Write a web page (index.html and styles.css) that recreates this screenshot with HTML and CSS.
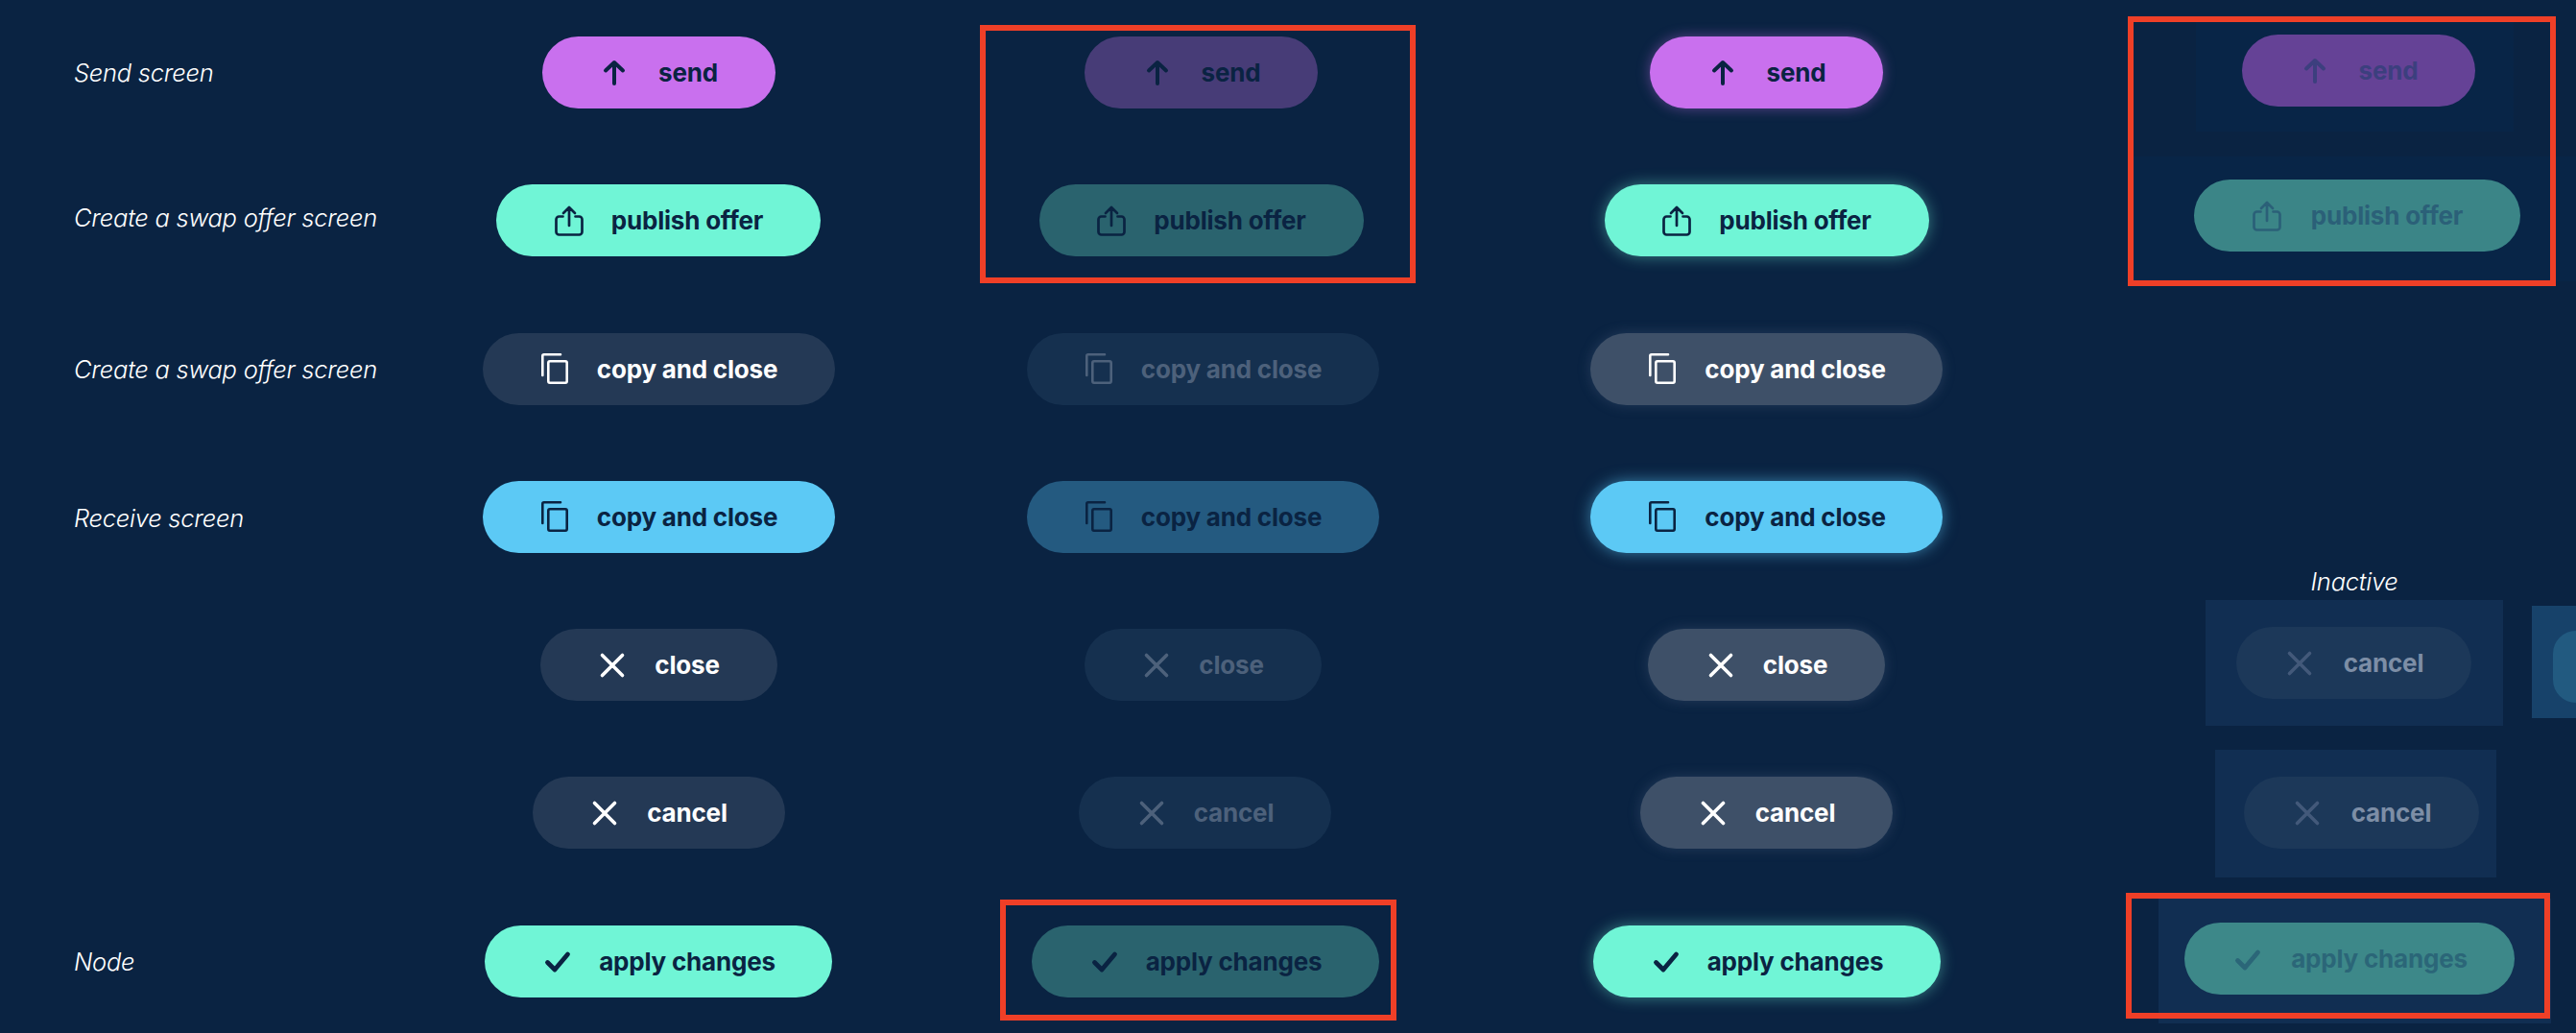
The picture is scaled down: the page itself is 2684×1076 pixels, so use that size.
FILE: index.html
```html
<!DOCTYPE html>
<html lang="en">
<head>
<meta charset="utf-8">
<title>Button states</title>
<link rel="stylesheet" href="styles.css">
</head>
<body>
<svg class="defs" width="0" height="0" aria-hidden="true">
  <symbol id="i-up" viewBox="0 0 32 32"><path d="M16 27V5.500M7 13.500 16 5 25 13.500" fill="none" stroke="currentColor" stroke-width="4" stroke-linecap="round" stroke-linejoin="round"/></symbol>
  <symbol id="i-share" viewBox="0 0 32 32"><path d="M9.500 11.500H5.500A3 3 0 0 0 2.500 14.500V27.500A3 3 0 0 0 5.500 30.500H26.500A3 3 0 0 0 29.500 27.500V14.500A3 3 0 0 0 26.500 11.500H22.500M16 21V2M10 8 16 2 22 8" fill="none" stroke="currentColor" stroke-width="2.700" stroke-linecap="round" stroke-linejoin="round"/></symbol>
  <symbol id="i-copy" viewBox="0 0 32 32"><path d="M3.300 23V2.800A1.500 1.500 0 0 1 4.800 1.300H22" fill="none" stroke="currentColor" stroke-width="2.600" stroke-linecap="round" stroke-linejoin="round"/><rect x="9.300" y="8.300" width="19.400" height="22.400" rx="1.600" fill="none" stroke="currentColor" stroke-width="2.600"/></symbol>
  <symbol id="i-x" viewBox="0 0 32 32"><path d="M5.500 5.500 26.500 26.500M26.500 5.500 5.500 26.500" fill="none" stroke="currentColor" stroke-width="3.600" stroke-linecap="round"/></symbol>
  <symbol id="i-check" viewBox="0 0 32 32"><path d="M6.500 17.500 14 25 27.500 9" fill="none" stroke="currentColor" stroke-width="4.800" stroke-linecap="round" stroke-linejoin="round"/></symbol>
</svg>

<main class="sheet">
  <div class="label">Send screen</div>
  <div class="cell"><a class="btn purple w-send"><svg class="ic"><use href="#i-up"/></svg><span>send</span></a></div>
  <div class="cell dim"><a class="btn purple w-send shift-l"><svg class="ic"><use href="#i-up"/></svg><span>send</span></a></div>
  <div class="cell"><a class="btn purple w-send glow"><svg class="ic"><use href="#i-up"/></svg><span>send</span></a></div>

  <div class="label up">Create a swap offer screen</div>
  <div class="cell"><a class="btn mint w-pub"><svg class="ic"><use href="#i-share"/></svg><span>publish offer</span></a></div>
  <div class="cell dim"><a class="btn mint w-pub shift-l"><svg class="ic"><use href="#i-share"/></svg><span>publish offer</span></a></div>
  <div class="cell"><a class="btn mint w-pub glow"><svg class="ic"><use href="#i-share"/></svg><span>publish offer</span></a></div>

  <div class="label">Create a swap offer screen</div>
  <div class="cell"><a class="btn slate w-copy"><svg class="ic"><use href="#i-copy"/></svg><span>copy and close</span></a></div>
  <div class="cell"><a class="btn slate w-copy off"><svg class="ic"><use href="#i-copy"/></svg><span>copy and close</span></a></div>
  <div class="cell"><a class="btn slate w-copy hover"><svg class="ic"><use href="#i-copy"/></svg><span>copy and close</span></a></div>

  <div class="label down">Receive screen</div>
  <div class="cell"><a class="btn sky w-copy"><svg class="ic"><use href="#i-copy"/></svg><span>copy and close</span></a></div>
  <div class="cell dim"><a class="btn sky w-copy"><svg class="ic"><use href="#i-copy"/></svg><span>copy and close</span></a></div>
  <div class="cell"><a class="btn sky w-copy glow"><svg class="ic"><use href="#i-copy"/></svg><span>copy and close</span></a></div>

  <div class="label"></div>
  <div class="cell"><a class="btn slate w-close"><svg class="ic"><use href="#i-x"/></svg><span>close</span></a></div>
  <div class="cell"><a class="btn slate w-close off"><svg class="ic"><use href="#i-x"/></svg><span>close</span></a></div>
  <div class="cell"><a class="btn slate w-close hover"><svg class="ic"><use href="#i-x"/></svg><span>close</span></a></div>

  <div class="label"></div>
  <div class="cell"><a class="btn slate w-cancel"><svg class="ic"><use href="#i-x"/></svg><span>cancel</span></a></div>
  <div class="cell"><a class="btn slate w-cancel off shift-r"><svg class="ic"><use href="#i-x"/></svg><span>cancel</span></a></div>
  <div class="cell"><a class="btn slate w-cancel hover"><svg class="ic"><use href="#i-x"/></svg><span>cancel</span></a></div>

  <div class="label">Node</div>
  <div class="cell"><a class="btn mint w-apply"><svg class="ic"><use href="#i-check"/></svg><span>apply changes</span></a></div>
  <div class="cell dim"><a class="btn mint w-apply shift-r"><svg class="ic"><use href="#i-check"/></svg><span>apply changes</span></a></div>
  <div class="cell"><a class="btn mint w-apply glow"><svg class="ic"><use href="#i-check"/></svg><span>apply changes</span></a></div>
</main>

<aside class="canvas">
  <div class="panel p-send"><a class="btn w-send flat-purple"><svg class="ic"><use href="#i-up"/></svg><span>send</span></a></div>
  <div class="panel p-pub"><a class="btn w-pubflat flat-mint"><svg class="ic"><use href="#i-share"/></svg><span>publish offer</span></a></div>
  <div class="note">Inactive</div>
  <div class="panel lift p-cancel1"><a class="btn w-cancelflat flat-slate"><svg class="ic"><use href="#i-x"/></svg><span>cancel</span></a></div>
  <div class="panel side p-side"><a class="btn w-sliver flat-side"></a></div>
  <div class="panel lift p-cancel2"><a class="btn w-cancelflat flat-slate"><svg class="ic"><use href="#i-x"/></svg><span>cancel</span></a></div>
  <div class="panel lift p-apply"><a class="btn w-applyflat flat-apply"><svg class="ic"><use href="#i-check"/></svg><span>apply changes</span></a></div>
</aside>

<div class="mark m1"></div>
<div class="mark m2"></div>
<div class="mark m3"></div>
<div class="mark m4"></div>
</body>
</html>
```
FILE: styles.css
```css
* { box-sizing: border-box; }
html, body { margin: 0; height: 100%; }
body {
  position: relative;
  width: 2684px;
  height: 1076px;
  overflow: hidden;
  background: #0a2342;
  font-family: "Inter", "Liberation Sans", sans-serif;
  color: #fff;
}
.defs { position: absolute; }

.sheet {
  display: grid;
  grid-template-columns: 441px 490px 644px 531px;
  grid-auto-rows: 154.3px;
  padding: 38px 0 0 0;
}
.label {
  padding-left: 77px;
  height: 75px;
  display: flex;
  align-items: center;
  font-size: 25.5px;
  font-weight: 300;
  font-style: italic;
  letter-spacing: -0.25px;
  color: #fff;
}
.label.up { padding-bottom: 7px; }
.label.down { padding-top: 2px; }
.cell { display: flex; justify-content: center; height: 75px; }
.shift-l { margin-right: 3px; }
.shift-r { margin-left: 5px; }

.btn {
  display: flex;
  align-items: center;
  justify-content: center;
  gap: 28px;
  height: 75px;
  border-radius: 38px;
  font-size: 26px;
  font-weight: 650;
  letter-spacing: -0.2px;
  white-space: nowrap;
}
.ic { width: 32px; height: 32px; flex: none; }

.w-send { width: 243px; gap: 30px; }
.w-pub { width: 338px; }
.w-copy { width: 367px; }
.w-close { width: 247px; }
.w-cancel { width: 263px; }
.w-apply { width: 362px; }
.w-pubflat { width: 340px; }
.w-cancelflat { width: 245px; }
.w-applyflat { width: 344px; }
.w-sliver { width: 24px; border-radius: 38px 0 0 38px; }

.purple { background: #c970ee; color: #0a2342; }
.mint { background: #70f5d6; color: #0a2342; }
.sky { background: #5cc9f5; color: #0a2342; }
.slate { background: #243955; color: #fff; }

.dim .btn { color: #0a2342; }
.dim .purple { background: #473c77; }
.dim .mint { background: #2a636e; }
.dim .sky { background: #245a80; }
.off { background: #15304f; color: #4d617b; }
.hover { background: #3e5068; box-shadow: 0 0 14px rgba(90, 110, 140, 0.32); }

.glow.purple { box-shadow: 0 0 14px rgba(201, 112, 238, 0.42); }
.glow.mint { box-shadow: 0 0 16px rgba(112, 245, 214, 0.45); }
.glow.sky { box-shadow: 0 0 16px rgba(92, 201, 245, 0.55); }

/* pasted inspector samples in the right-hand column */
.canvas { position: absolute; inset: 0; pointer-events: none; }
.panel { position: absolute; background: #082547; }
.lift { background: #112e52; }
.side { background: #17426a; }
.panel .btn { position: absolute; gap: 30px; }
.note {
  position: absolute;
  left: 2403px;
  top: 590px;
  width: 100px;
  text-align: center;
  font-size: 25.5px;
  font-weight: 300;
  font-style: italic;
  letter-spacing: -0.25px;
}
.p-send { left: 2288px; top: 20px; width: 331px; height: 117px; }
.p-send .btn { left: 48px; top: 16px; }
.p-pub { left: 2223px; top: 163px; width: 461px; height: 130px; }
.p-pub .btn { left: 63px; top: 24px; }
.p-cancel1 { left: 2298px; top: 625px; width: 310px; height: 131px; }
.p-cancel1 .btn { left: 32px; top: 28px; }
.p-side { left: 2638px; top: 631px; width: 46px; height: 117px; }
.p-side .btn { left: 22px; top: 26px; }
.p-cancel2 { left: 2308px; top: 781px; width: 293px; height: 133px; }
.p-cancel2 .btn { left: 30px; top: 28px; }
.p-apply { left: 2249px; top: 936px; width: 409px; height: 130px; }
.p-apply .btn { left: 27px; top: 25px; }

.flat-purple { background: #654296; color: #3c3f7e; }
.flat-mint { background: #3b8587; color: #2b6078; }
.flat-slate { background: #1c3859; color: #7d8ea6; }
.flat-slate .ic { color: #43597a; }
.flat-side { background: #225a80; }
.flat-apply { background: #3d8889; color: #2b6678; }

.mark { position: absolute; border: 6px solid #ef3f27; }
.m1 { left: 1021px; top: 26px; width: 454px; height: 269px; }
.m2 { left: 1042px; top: 937px; width: 413px; height: 126px; }
.m3 { left: 2217px; top: 17px; width: 446px; height: 281px; }
.m4 { left: 2215px; top: 930px; width: 442px; height: 131px; }
```
